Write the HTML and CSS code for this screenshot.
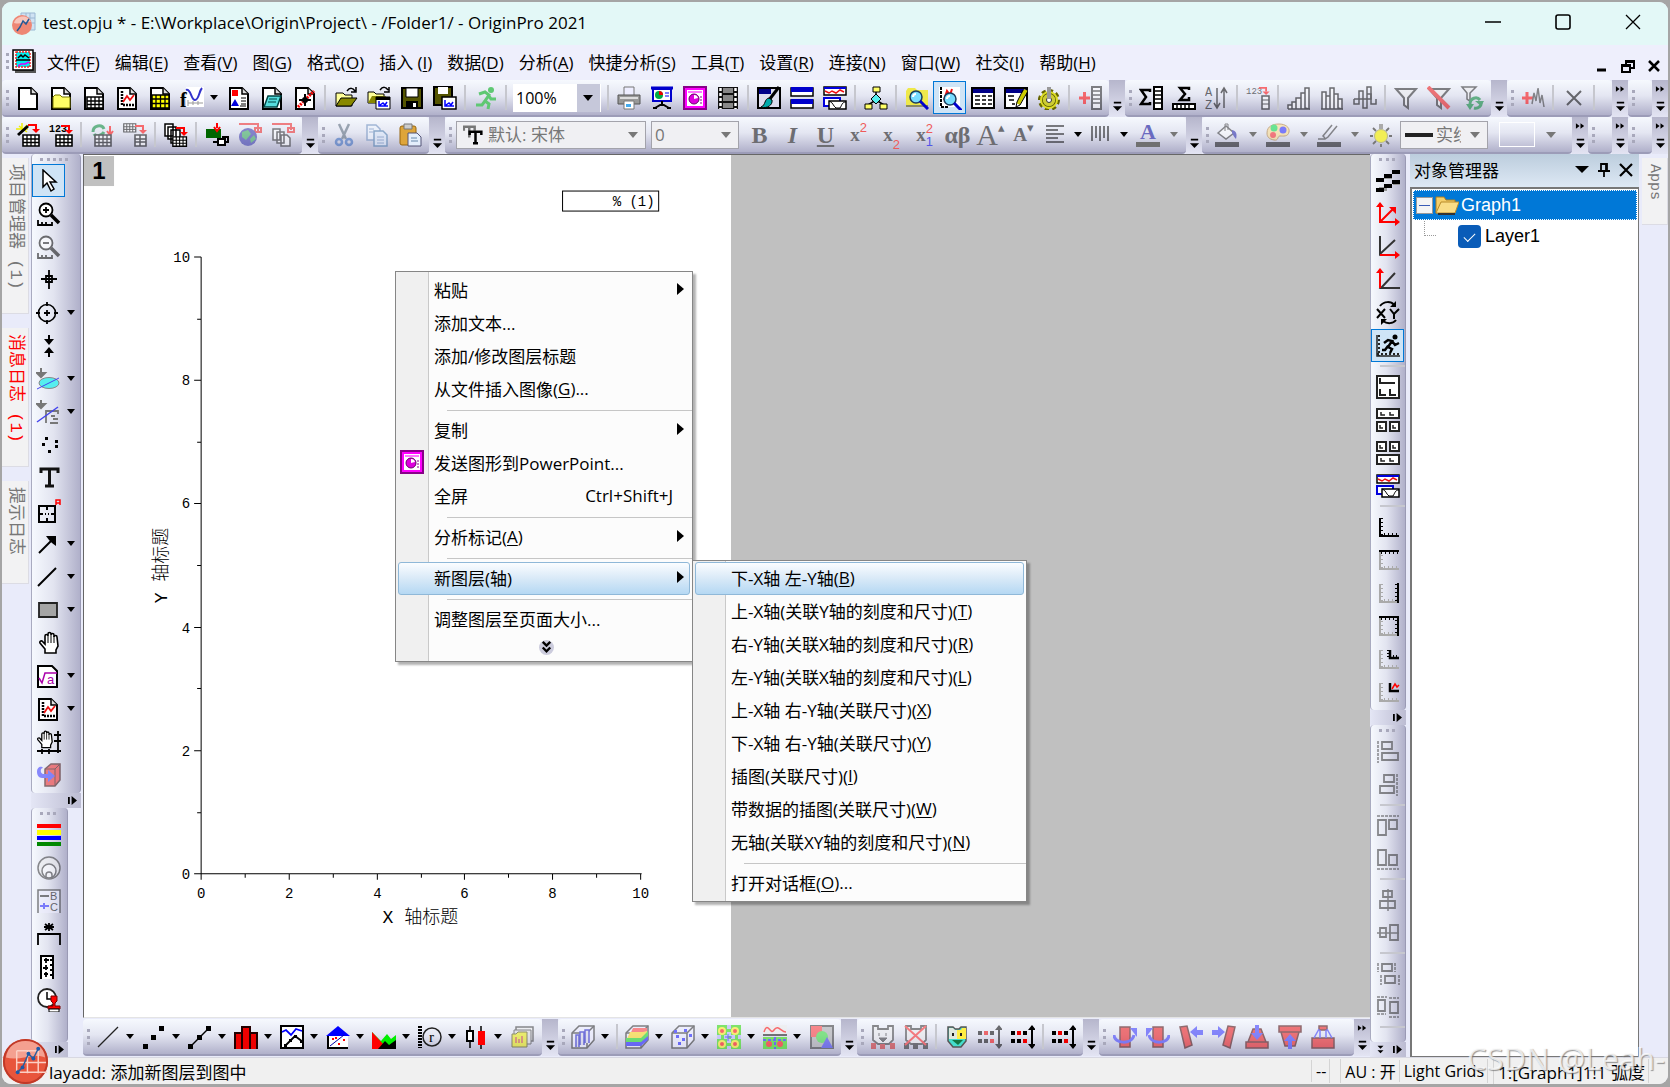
FILE: index.html
```html
<!DOCTYPE html>
<html lang="zh-CN">

  <head>
    <meta charset="utf-8">
    <title>OriginPro 2021</title>
    <link rel="stylesheet" href="styles.css">
  </head>

  <body>
    <!-- icon sprite -->
    <svg class="sprite" aria-hidden="true">
      <defs>
        <g id="pg"><path d="M3 2h12l6 6v15H3z" fill="#fff" stroke="#000" stroke-width="2"/><path d="M15 2v6h6" fill="#ddd" stroke="#000" stroke-width="1.5"/></g>
        <g id="tbl"><path d="M1 1h16v11H1z" fill="#fff" stroke="#000" stroke-width="1.6"/><path d="M1 5h16M1 8.500h16M5 1v11M9 1v11M13 1v11" stroke="#000" stroke-width="1.3"/></g>
        <g id="hook"><path d="M1 2h8v4" fill="none" stroke="#f00" stroke-width="2"/><path d="M5 6h8l-4 4z" fill="#f00"/></g>
        <g id="lens"><circle cx="9" cy="9" r="6" fill="#7df" stroke="#1a3c5c" stroke-width="1.500"/><path d="M13 13l8 8" stroke="#00c" stroke-width="3"/><path d="M6 9a3 3 0 0 1 3-3" fill="none" stroke="#fff" stroke-width="2"/></g>
        <g id="box3"><path d="M1 8l7-7h15v14l-7 8H1z" fill="#eef" stroke="#444" stroke-width="1.500"/><path d="M1 8h15v15M16 8l7-7" fill="none" stroke="#444" stroke-width="1.500"/></g>
        <g id="win"><path d="M1 2h22v20H1z" fill="#fff" stroke="#000" stroke-width="2"/><path d="M2 3h20v4H2z" fill="#008"/></g>
        <g id="redbox"><path d="M8 6l6-5h9v16l-5 6H8z" fill="#e22" stroke="#300" stroke-width="1.500"/><path d="M8 6h10v17M18 6l5-5" fill="none" stroke="#300"/></g>
        <g id="handS"><path d="M6 22v-4L1 12c-1-2 2-3 3-1l2 2V5c0-2 3-2 3 0V3c0-2 3-2 3 0v1c0-2 3-2 3 0v2c0-2 3-2 3 0l1 9-2 4v3z" fill="#fff" stroke="#000" stroke-width="1.600"/><path d="M9 5v7M12 4v8M15 5v7" stroke="#000"/></g>
        <g id="axg" fill="none" stroke="#aaa" stroke-width="2"><path d="M4 3v18h19"/><path d="M6 3v17M4 19h19" stroke-dasharray="1 3"/></g>
      </defs>
      <symbol id="orb" viewBox="0 0 48 48"><circle cx="24" cy="24" r="23" fill="#e8553c"/><circle cx="24" cy="24" r="22" fill="none" stroke="#c03a28" stroke-width="2"/><path d="M4 20C6 8 14 3 24 3s19 6 20 17c-12-5-26 4-40 0z" fill="#f4a090"/><path d="M15 13v23M26 13v23M37 13v23M15 13h23M15 25h30M15 35h31" stroke="#fbcfc4" stroke-width="1.500"/><path d="M16 35l5-5 6-14 5 5 5-10" fill="none" stroke="#2a5f9e" stroke-width="1.500"/><g fill="#1c5aa8"><circle cx="16" cy="35" r="2"/><circle cx="21" cy="30" r="2"/><circle cx="27" cy="16" r="2"/><circle cx="32" cy="21" r="2"/><circle cx="37" cy="11" r="2"/></g></symbol>
      <symbol id="app" viewBox="0 0 24 24"><path d="M9 1h14v17H9z" fill="#cfe2f3" stroke="#9bb8d3"/><path d="M14 1v17M18 1v17M9 6h14M9 11h14" stroke="#9bb8d3"/><circle cx="10" cy="13" r="10" fill="#ee8674"/><path d="M2 11c2-8 14-9 17-1-6-1-10 3-17 1z" fill="#f8c5bb"/><path d="M5 19l3-4 3-6 3 3 3-5" fill="none" stroke="#245a97" stroke-width="1.500"/></symbol>
      <symbol id="graphwin" viewBox="0 0 24 24"><path d="M3 3h21v21H3z" fill="#555"/><path d="M1 1h20v20H1z" fill="#fff" stroke="#000" stroke-width="1.500"/><path d="M4 3h14v15H4z" fill="#0ee" stroke="#e22" stroke-width="1.500" stroke-dasharray="2 1"/><path d="M6 9l3-3 2 2 2-2 4 3M4 11h14" fill="none" stroke="#000" stroke-width="1.500"/><path d="M6 17l3-2 4 0 4-2" fill="none" stroke="#d0f" stroke-width="1.500"/></symbol>
      <symbol id="new" viewBox="0 0 24 24"><use href="#pg"/></symbol>
      <symbol id="folder" viewBox="0 0 24 24"><use href="#pg"/><path d="M4 11l2-2h5l2 2h8v11H4z" fill="#ff6" stroke="#770"/></symbol>
      <symbol id="book" viewBox="0 0 24 24"><use href="#pg"/><use href="#tbl" x="4" y="10"/></symbol>
      <symbol id="graph" viewBox="0 0 24 24"><use href="#pg"/><path d="M7 5v14h13" fill="none" stroke="#000" stroke-width="2.500" stroke-dasharray="2 1"/><path d="M8 16l4-6 3 4 4-5" fill="none" stroke="#e11" stroke-width="1.800"/></symbol>
      <symbol id="matrix" viewBox="0 0 24 24"><use href="#pg"/><path d="M4 9h17v13H4z" fill="#ff0" stroke="#000" stroke-width="1.500"/><path d="M4 13h17M4 17.500h17M8 9v13M12.500 9v13M17 9v13" stroke="#000" stroke-width="1.300"/></symbol>
      <symbol id="func" viewBox="0 0 24 24"><path d="M6 1h18v20H6z" fill="#fff"/><path d="M8 17h15M8 14v6M13 15v4M18 15v4" stroke="#999"/><path d="M6 4c5-2 5 10 9 10s4-9 7-12" fill="none" stroke="#33c" stroke-width="2"/><text x="0" y="21" font-family="Liberation Serif" font-size="20" font-weight="bold">f</text></symbol>
      <symbol id="layout" viewBox="0 0 24 24"><use href="#pg"/><path d="M5 4h6v6H5z" fill="#f00"/><path d="M4 20l4-7 4 7z" fill="#00d"/><path d="M14 12h5M14 15h5M14 18h5M13 20h6" stroke="#000"/></symbol>
      <symbol id="notes" viewBox="0 0 24 24"><use href="#pg"/><path d="M8 10h13l-4 11H4z" fill="#5dd" stroke="#044" stroke-width="1.500"/><path d="M9 13h8M8 16h8" stroke="#044"/></symbol>
      <symbol id="digit" viewBox="0 0 24 24"><use href="#pg"/><path d="M5 21l5-5M14 12l7-7" stroke="#f00" stroke-width="3" stroke-dasharray="2 1"/><path d="M12 8v12M6 14h12" stroke="#000" stroke-width="2"/><circle cx="12" cy="14" r="3"/></symbol>
      <symbol id="open" viewBox="0 0 24 24"><path d="M2 20V7h7l2 2h7v11z" fill="#ff9" stroke="#000"/><path d="M2 20l5-8h16l-6 8z" fill="#880" stroke="#000"/><path d="M13 5c3-4 6-3 8 0M22 1v5h-5" fill="none" stroke="#000" stroke-width="1.500"/></symbol>
      <symbol id="opentpl" viewBox="0 0 24 24"><path d="M1 17V6h6l2 2h8v9z" fill="#ff9" stroke="#000"/><path d="M1 17l4-7h14l-4 7z" fill="#880"/><path d="M9 11h14v12H9z" fill="#fff" stroke="#000"/><path d="M9 11h14v3H9z" fill="#000"/><path d="M12 15v5h9M13 19l3-2 2 2 2-3" fill="none" stroke="#00f" stroke-width="1.500"/><path d="M13 4c3-4 6-3 8 0M22 1v5h-5" fill="none" stroke="#000" stroke-width="1.500"/></symbol>
      <symbol id="save" viewBox="0 0 24 24"><path d="M2 2h20v20H2z" fill="#550" stroke="#000" stroke-width="2"/><path d="M6 2h12v9H6z" fill="#fff" stroke="#000"/><path d="M6 15h12v7H6z" fill="#000"/><path d="M13 17h3v4h-3z" fill="#fff"/></symbol>
      <symbol id="savetpl" viewBox="0 0 24 24"><path d="M1 1h18v18H1z" fill="#550" stroke="#000" stroke-width="2"/><path d="M5 1h10v7H5z" fill="#fff"/><path d="M9 11h14v12H9z" fill="#fff" stroke="#000" stroke-width="1.500"/><path d="M12 14v6h9M13 19l3-2 2 2 2-3" fill="none" stroke="#00f" stroke-width="1.500"/></symbol>
      <symbol id="run" viewBox="0 0 24 24"><circle cx="17" cy="4" r="3"/><path d="M5 8l6-2 4 3-4 6 4 3-1 5M11 15l-3 4H2M14 9l3 4h5" fill="none" stroke="currentColor" stroke-width="3"/></symbol>
      <symbol id="print" viewBox="0 0 24 24"><path d="M7 1h10v9H7z" fill="#eef" stroke="#777"/><path d="M1 9h22v9H1z" fill="#999" stroke="#555"/><path d="M3 12h18" stroke="#ddd" stroke-width="2"/><path d="M7 15h10v8H7z" fill="#fff" stroke="#777"/><path d="M9 18h5v3H9z" fill="#4ae"/></symbol>
      <symbol id="slide" viewBox="0 0 24 24"><path d="M1 2h22" stroke="#00c" stroke-width="3"/><path d="M3 3h18v12H3z" fill="#fff" stroke="#00c" stroke-width="2"/><circle cx="9" cy="9" r="4" fill="#0a4"/><path d="M9 9V5a4 4 0 0 1 4 4z" fill="#e00"/><path d="M15 7h4M15 10h4" stroke="#00f"/><path d="M12 15v4M5 22l7-4 7 4M3 22h4M17 22h4" fill="none" stroke="#000" stroke-width="2"/></symbol>
      <symbol id="ppt" viewBox="0 0 24 24"><path d="M1 1h22v22H1z" fill="#f0f" stroke="#808" stroke-width="2"/><path d="M4 4h16v16H4z" fill="#fff"/><path d="M5 6h14" stroke="#f4f" stroke-width="1.500"/><circle cx="11" cy="13" r="5" fill="#d0d" stroke="#606"/><path d="M11 13V9a4 4 0 0 1 4 3z" fill="#fff"/><path d="M18 10v8" stroke="#808" stroke-dasharray="2 1"/></symbol>
      <symbol id="film" viewBox="0 0 24 24"><path d="M2 1h20v22H2z" fill="#111"/><path d="M7 2h10v5H7zM7 9h10v6H7zM7 17h10v5H7z" fill="#888"/><path d="M4.500 2v21M19.500 2v21" stroke="#fff" stroke-width="2.500" stroke-dasharray="3 2"/></symbol>
      <symbol id="theme" viewBox="0 0 24 24"><path d="M1 2h22v20H1z" fill="#dde" stroke="#000" stroke-width="2"/><path d="M2 3h12v5H2z" fill="#008"/><path d="M22 1L12 14" stroke="#000" stroke-width="3"/><path d="M12 12c-5 1-3 7-8 9 6 2 12-2 11-7z" fill="#0aa" stroke="#000"/></symbol>
      <symbol id="panes" viewBox="0 0 24 24"><path d="M1 2h22v8H1zM1 14h22v8H1z" fill="#fff" stroke="#000" stroke-width="1.500"/><path d="M1 1h22v5H1zM1 13h22v5H1z" fill="#00c"/></symbol>
      <symbol id="merge" viewBox="0 0 24 24"><path d="M1 1h22v8H1z" fill="#fff" stroke="#000" stroke-width="1.500"/><path d="M1 2h22" stroke="#00d" stroke-width="2"/><path d="M2 5l4 2 3-2 4 2 4-3 4 2" fill="none" stroke="#e11" stroke-width="1.500"/><path d="M1 12h16v8H1z" fill="#fff" stroke="#00d" stroke-width="2"/><path d="M6 15h17v8H6z" fill="#fff" stroke="#000" stroke-width="1.500"/><path d="M6 15c4 1 4 5 7 7h4c2-3 2-6 6-6" fill="none" stroke="#000"/></symbol>
      <symbol id="tree" viewBox="0 0 24 24"><path d="M12 5v6M12 14l-8 5M12 14l8 5" stroke="#000" stroke-width="1.500"/><path d="M9 1h7v5H9z" fill="#ff6" stroke="#000"/><path d="M12 8l5 5-5 5-5-5z" fill="#5ee" stroke="#000"/><path d="M1 18h7v5H1zM16 18h7v5h-7z" fill="#ff6" stroke="#000"/></symbol>
      <symbol id="explore" viewBox="0 0 24 24"><path d="M1 5l2-3h7l2 2h11v16H1z" fill="#eee84a"/><path d="M1 20h22" stroke="#886" stroke-width="2"/><use href="#lens" x="2" y="2"/></symbol>
      <symbol id="zoomgraph" viewBox="0 0 24 24"><path d="M1 1h21v20H1z" fill="#fff"/><path d="M3 1v20h8" fill="none" stroke="#000" stroke-width="2" stroke-dasharray="3 1"/><path d="M6 14l3-9 3 4 2-6" fill="none" stroke="#e11" stroke-width="2"/><use href="#lens" x="3" y="4"/></symbol>
      <symbol id="results" viewBox="0 0 24 24"><use href="#win"/><path d="M4 10h5M11 10h4M17 10h4M4 14h5M11 14h4M17 14h4M4 18h5M11 18h4M17 18h4" stroke="#000" stroke-width="1.500"/></symbol>
      <symbol id="cmd" viewBox="0 0 24 24"><use href="#win"/><path d="M4 10h6M5 14h5M8 18h3" stroke="#000" stroke-width="1.500"/><path d="M22 4l-8 14" stroke="#cc0" stroke-width="4"/><path d="M24 5l-8 14-4 2 1-5 6-12" fill="none" stroke="#000"/></symbol>
      <symbol id="gear" viewBox="0 0 24 24"><circle cx="12" cy="14" r="7" fill="#cc3" stroke="#550" stroke-width="1.500"/><circle cx="12" cy="14" r="9" fill="none" stroke="#660" stroke-width="4" stroke-dasharray="4 3"/><circle cx="12" cy="14" r="8" fill="none" stroke="#dd2" stroke-width="2"/><circle cx="12" cy="14" r="2.500" fill="#fff" stroke="#333"/><path d="M12 1v12" stroke="#999" stroke-width="4"/></symbol>
      <symbol id="addcol" viewBox="0 0 24 24"><path d="M1 12h11M6.500 6v12" stroke="#f00" stroke-width="3"/><path d="M14 1h9v22h-9z" fill="#fff" stroke="#222" stroke-width="2"/><path d="M14 5h9M14 9h9M14 13h9M14 17h9" stroke="#222" stroke-width="1.500"/></symbol>
      <symbol id="sumcol" viewBox="0 0 24 24"><path d="M11 6V4H2l5 7-5 7h9v-2" fill="none" stroke="#000" stroke-width="2.500"/><path d="M15 1h8v22h-8z" fill="#fff" stroke="#000" stroke-width="2"/><path d="M15 5h8M15 9h8M15 13h8M15 17h8" stroke="#000" stroke-width="1.500"/></symbol>
      <symbol id="sumrow" viewBox="0 0 24 24"><path d="M17 4V2H8l5 6-5 6h9v-3" fill="none" stroke="#000" stroke-width="2.500"/><path d="M1 18h22v5H1z" fill="#fff" stroke="#000" stroke-width="2"/><path d="M5 18v5M9 18v5M13 18v5M17 18v5" stroke="#000" stroke-width="1.500"/></symbol>
      <symbol id="sort" viewBox="0 0 24 24"><text x="0" y="10" font-size="12" font-family="Liberation Mono">A</text><text x="0" y="23" font-size="12" font-family="Liberation Mono">Z</text><path d="M12 2v19M9 17l3 5 3-5M19 22V3M16 7l3-5 3 5" fill="none" stroke="#000" stroke-width="1.500"/></symbol>
      <symbol id="setval" viewBox="0 0 24 24"><text x="0" y="8" font-size="9" font-family="Liberation Mono">123</text><g transform="translate(12 0) scale(.9)"><use href="#hook"/></g><path d="M16 10h7v13h-7z" fill="#fff" stroke="#000" stroke-width="1.500"/><path d="M16 14h7M16 18h7" stroke="#000"/></symbol>
      <symbol id="bars1" viewBox="0 0 24 24"><path d="M1 23v-4h4v4M5 22v-6h4v7M9 22V12h5v11M14 22V7h4v16M18 22V2h4v21zM1 23h22" fill="#fff" stroke="#000" stroke-width="1.500"/></symbol>
      <symbol id="bars2" viewBox="0 0 24 24"><path d="M2 23V6h4v17M6 22V10h4v13M10 22V2h4v21M14 22V8h4v15M18 22v-9h4v10zM1 23h22" fill="#fff" stroke="#000" stroke-width="1.500"/></symbol>
      <symbol id="bars3" viewBox="0 0 24 24"><path d="M1 13h5V5h4v17h4V1h4v17h5v-5" fill="none" stroke="#000" stroke-width="1.500"/><path d="M1 13v5h5v-5h12V8h-4" fill="none" stroke="#000" stroke-width="1.500"/></symbol>
      <symbol id="filter" viewBox="0 0 24 24"><path d="M2 3h20l-8 9v10l-4-3v-7z" fill="#eee" stroke="#222" stroke-width="2"/></symbol>
      <symbol id="nofilter" viewBox="0 0 24 24"><path d="M2 3h20l-8 9v10l-4-3v-7z" fill="#eee" stroke="#222" stroke-width="2"/><path d="M1 1l21 21" stroke="#e11" stroke-width="4"/></symbol>
      <symbol id="refilter" viewBox="0 0 24 24"><path d="M2 1h14l-6 6v8l-3-2V7z" fill="#eee" stroke="#222" stroke-width="1.500"/><path d="M10 18c0-6 7-8 10-4M14 22c4 1 8-2 7-6" fill="none" stroke="#083" stroke-width="3"/><path d="M15 15h9l-3 5zM6 18h8l-4 6z" fill="#083"/></symbol>
      <symbol id="addplot" viewBox="0 0 24 24"><path d="M1 12h11M6 6v12" stroke="#f00" stroke-width="3"/><path d="M11 18l2-11 2 8 2-13 2 15 2-8 2 12" fill="none" stroke="#333" stroke-width="1.500"/></symbol>
      <symbol id="cross" viewBox="0 0 24 24"><path d="M5 5l14 14M19 5L5 19" stroke="currentColor" stroke-width="2"/></symbol>
      <symbol id="wizard" viewBox="0 0 24 24"><path d="M3 3l8 6M11 2L4 10M6 0v8M0 6h12" stroke="#ee0" stroke-width="1.500"/><path d="M2 12l10-9" stroke="#000" stroke-width="3"/><use href="#hook" x="11"/><use href="#tbl" x="6" y="11"/></symbol>
      <symbol id="import" viewBox="0 0 24 24"><text x="0" y="9" font-size="10" font-weight="bold" font-family="Liberation Mono">123</text><use href="#hook" x="11" y="1"/><use href="#tbl" x="6" y="11"/></symbol>
      <symbol id="reimport" viewBox="0 0 24 24"><path d="M3 9c0-7 9-8 11-3M14 9c-3 5-9 4-10 2" fill="none" stroke="#083" stroke-width="3"/><path d="M20 3v8M17 8l3 4 3-4" fill="none" stroke="#f00" stroke-width="2"/><use href="#tbl" x="4" y="11"/></symbol>
      <symbol id="copycols" viewBox="0 0 24 24"><g transform="scale(.75)"><use href="#tbl"/></g><use href="#hook" x="11" y="1"/><path d="M12 12h11v11H12z" fill="#fff" stroke="#000" stroke-width="1.600"/><path d="M12 16h11M12 19h11M17 12v11" stroke="#000" stroke-width="1.500"/></symbol>
      <symbol id="batch" viewBox="0 0 24 24"><path d="M1 1h8v12H1zM4 4h8v12H4zM7 7h9v13H7z" fill="#fff" stroke="#000" stroke-width="1.500"/><use href="#hook" x="11" y="3"/><g transform="translate(8 13) scale(.85)"><use href="#tbl"/></g></symbol>
      <symbol id="connect" viewBox="0 0 24 24"><path d="M1 6h15v9H1z" fill="#060"/><path d="M12 0v5M9 4l3 4 3-4" fill="none" stroke="#f00" stroke-width="2"/><path d="M8 19h5M13 16h7v6h-7z" fill="#fff" stroke="#000" stroke-width="2"/><path d="M20 19h3V14h-6" fill="none" stroke="#000" stroke-width="2"/></symbol>
      <symbol id="web" viewBox="0 0 24 24"><path d="M1 1h19v7M17 5h6v4h-6z" fill="none" stroke="#e22" stroke-width="2"/><circle cx="10" cy="14" r="9" fill="#33a"/><path d="M4 9l6-2 3 4-5 6-4-3zM12 16l4-4 2 4-5 4z" fill="#3a5"/></symbol>
      <symbol id="sheets" viewBox="0 0 24 24"><path d="M1 1h19v6M17 5h6v4h-6z" fill="none" stroke="#e22" stroke-width="2"/><path d="M2 6h7v11H2zM6 9h7v11H6zM10 12h6l3 3v8h-9z" fill="#fff" stroke="#222" stroke-width="1.500"/></symbol>
      <symbol id="cut" viewBox="0 0 24 24"><path d="M7 1l7 15M17 1l-7 15" stroke="#567" stroke-width="2.500"/><circle cx="7" cy="19" r="3" fill="none" stroke="#36b" stroke-width="2.500"/><circle cx="17" cy="19" r="3" fill="none" stroke="#36b" stroke-width="2.500"/></symbol>
      <symbol id="copy" viewBox="0 0 24 24"><path d="M2 2h9l4 4v11H2z" fill="#eef5ff" stroke="#68b" stroke-width="1.500"/><path d="M9 8h9l4 4v11H9z" fill="#dbe9fb" stroke="#47a" stroke-width="1.500"/><path d="M12 14h7M12 17h7M12 20h7M4 6h5M4 9h4" stroke="#68b"/></symbol>
      <symbol id="paste" viewBox="0 0 24 24"><rect x="2" y="3" width="16" height="19" rx="2" fill="#dea53a" stroke="#96650f"/><path d="M6 1h8v5H6z" fill="#ccc" stroke="#777"/><path d="M10 10h9l4 4v9H10z" fill="#e4eefc" stroke="#557"/><path d="M13 15h6M13 18h7" stroke="#68a"/></symbol>
      <symbol id="tt" viewBox="0 0 24 24"><path d="M1 7V2h13v5M7.500 2v13" fill="none" stroke="#777" stroke-width="3"/><path d="M8 12V8h14v4M15 8v14M12 22h6" fill="none" stroke="#000" stroke-width="3"/></symbol>
      <symbol id="align" viewBox="0 0 24 24"><path d="M2 3h18M2 7h12M2 11h18M2 15h12M2 19h18" stroke="#000" stroke-width="1.500"/></symbol>
      <symbol id="lines" viewBox="0 0 24 24"><path d="M2 3v15M6 3v12M10 3v15M14 3v12M18 3v15" stroke="#000" stroke-width="1.500"/></symbol>
      <symbol id="bucket" viewBox="0 0 24 24"><path d="M3 10l8-7 8 7-8 6z" fill="#fff" stroke="#333" stroke-width="1.500"/><path d="M10 8V1h3v6" fill="none" stroke="#333"/><path d="M17 7c5 1 5 5 4 9-2-2-3-4-4-6z" fill="#22a"/><path d="M0 19h24v5H0z" fill="#111"/></symbol>
      <symbol id="palette" viewBox="0 0 24 24"><path d="M1 10C1 3 7 1 13 1s11 3 10 8-6 4-9 4-1 5-6 4-7-3-7-7z" fill="#fd8" stroke="#a73"/><circle cx="8" cy="5" r="3.500" fill="#0d4"/><circle cx="17" cy="7" r="3.500" fill="#22f"/><circle cx="7" cy="12" r="3" fill="#f22"/><path d="M0 19h24v5H0z" fill="#111"/></symbol>
      <symbol id="pen" viewBox="0 0 24 24"><path d="M1 16h7l3-2L20 3M8 15l-2-2 9-11" fill="none" stroke="#333" stroke-width="1.500"/><path d="M0 19h24v5H0z" fill="#111"/></symbol>
      <symbol id="sun" viewBox="0 0 24 24"><circle cx="12" cy="13" r="6.500" fill="#f2ee55" stroke="#bb8"/><path d="M10 1h4v5h-4z" fill="#aaa"/><path d="M4 5l3 3M20 5l-3 3M1 13h3M20 13h3M4 21l3-3M20 21l-3-3M12 21v3" stroke="#777" stroke-width="1.800"/></symbol>

      <symbol id="pointer" viewBox="0 0 24 24"><path d="M6 1v17l4-4 4 8 3-2-4-7h6z" fill="#fff" stroke="#000" stroke-width="1.500"/></symbol>
      <symbol id="zoomin" viewBox="0 0 24 24"><circle cx="9" cy="8" r="6.500" fill="#fff" stroke="#000" stroke-width="1.800"/><path d="M6 8h6M9 5v6" stroke="#000" stroke-width="1.800"/><path d="M14 13l8 8" stroke="#000" stroke-width="3.500"/><path d="M1 18v5h14v-3M5 23v-3M9 23v-3" fill="none" stroke="#000" stroke-width="1.800"/></symbol>
      <symbol id="zoomout" viewBox="0 0 24 24"><circle cx="9" cy="8" r="6.500" fill="#fff" stroke="#000" stroke-width="1.800"/><path d="M6 8h6" stroke="#000" stroke-width="1.800"/><path d="M14 13l8 8" stroke="#000" stroke-width="3.500"/><path d="M1 18v5h14v-3M5 23v-3M9 23v-3" fill="none" stroke="#000" stroke-width="1.800"/></symbol>
      <symbol id="reader" viewBox="0 0 24 24"><path d="M12 2v19M4 11h16M9 8h6v6H9z" fill="none" stroke="#000" stroke-width="1.800"/></symbol>
      <symbol id="datareader" viewBox="0 0 24 24"><circle cx="11" cy="12" r="8.500" fill="none" stroke="#000" stroke-width="1.600"/><path d="M11 1v4M11 19v4M0 12h4M18 12h4M8 12h6M11 9v6" stroke="#000" stroke-width="1.800"/></symbol>
      <symbol id="selector" viewBox="0 0 24 24"><path d="M12 1v6M12 23v-6" stroke="#000" stroke-width="2"/><path d="M7 5h10l-5 6zM7 19h10l-5-6z"/></symbol>
      <symbol id="region" viewBox="0 0 24 24"><path d="M5 1v8M1 6l4 4 4-4z" stroke="#777" stroke-width="2" fill="#777"/><ellipse cx="13" cy="16" rx="10" ry="5.500" fill="#5ee" stroke="#888"/><path d="M1 22L23 11" stroke="#44e"/></symbol>
      <symbol id="mask" viewBox="0 0 24 24"><path d="M5 0v6M1 4l4 4 4-4z" stroke="#777" stroke-width="2" fill="#777"/><path d="M10 23V11h12v3M15 16h4M17 19h5M14 23h8" fill="none" stroke="#777" stroke-width="1.800"/><path d="M1 22L22 7" stroke="#44e" stroke-width="1.500"/></symbol>
      <symbol id="draw" viewBox="0 0 24 24"><path d="M8 4h3v3H8zM5 10h3v3H5zM11 17h3v3h-3zM18 7h3v3h-3zM18 12h3v3h-3z"/></symbol>
      <symbol id="text" viewBox="0 0 24 24"><path d="M4 7V3h17v4M12.500 3v18M8 20h9" fill="none" stroke="#111" stroke-width="3"/></symbol>
      <symbol id="annot" viewBox="0 0 24 24"><path d="M2 7h16v16H2zM10 7v4M10 19v4M2 15h4M14 15h4M8 15h1M11 15h1" fill="none" stroke="#000" stroke-width="2"/><path d="M19 6V1h4v5M19 4h4" fill="none" stroke="#f00" stroke-width="1.500"/></symbol>
      <symbol id="arrow" viewBox="0 0 24 24"><path d="M3 21L16 8" stroke="#000" stroke-width="2"/><path d="M10 4h10v10l-4-3-3-3z"/></symbol>
      <symbol id="line" viewBox="0 0 24 24"><path d="M2 21L20 3" stroke="#000" stroke-width="2"/></symbol>
      <symbol id="thinline" viewBox="0 0 24 24"><path d="M2 22L22 2" stroke="#222" stroke-width="1.300"/></symbol>
      <symbol id="rect" viewBox="0 0 24 24"><path d="M3 5h18v14H3z" fill="#a5a5a5" stroke="#222" stroke-width="1.800"/></symbol>
      <symbol id="hand" viewBox="0 0 24 24"><use href="#handS" x="2"/></symbol>
      <symbol id="eq" viewBox="0 0 24 24"><path d="M2 2h14l5 5v16H2z" fill="#fff" stroke="#000" stroke-width="2"/><path d="M3 14l3 5 3-10h12" fill="none" stroke="#a0a" stroke-width="1.500"/><text x="11" y="20" font-size="13" fill="#a0a" font-family="Liberation Sans">a</text></symbol>
      <symbol id="handaxis" viewBox="0 0 24 24"><g transform="scale(.8)"><use href="#handS"/></g><path d="M21 1v22M0 21h24M17 5h7M17 11h7M5 19v5M12 19v5" stroke="#000" stroke-width="1.800"/></symbol>
      <symbol id="export" viewBox="0 0 24 24"><use href="#redbox"/><path d="M0 9c0-6 5-6 6-4-3 0-3 5 0 6h5V7l7 6-7 6v-4H5c-3 0-5-3-5-6z" fill="#33f"/></symbol>
      <symbol id="stripes" viewBox="0 0 24 24"><path d="M0 1h24v4H0z" fill="#f00"/><path d="M0 7h24v5H0z" fill="#ff0"/><path d="M0 13h24v4H0z" fill="#00f"/><path d="M0 19h24v4H0z" fill="#080"/></symbol>
      <symbol id="rings" viewBox="0 0 24 24"><circle cx="12" cy="12" r="11" fill="#eee" stroke="#333" stroke-width="1.500"/><circle cx="12" cy="15" r="7" fill="#fff" stroke="#333" stroke-width="1.500"/><path d="M9 23v-4a3 3 0 0 1 6 0v4" fill="none" stroke="#333" stroke-width="1.500"/></symbol>
      <symbol id="legend" viewBox="0 0 24 24"><path d="M1 24V1h22v23" fill="#eef" stroke="#222" stroke-width="1.500"/><path d="M3 7h9" stroke="#222" stroke-width="2"/><path d="M3 17h9M7 14v6" stroke="#22f" stroke-width="2"/><text x="13" y="11" font-size="11" font-family="Liberation Sans">B</text><text x="13" y="22" font-size="11" font-family="Liberation Sans">C</text></symbol>
      <symbol id="star" viewBox="0 0 24 24"><path d="M1 23V12h22v11M12 1v8M8 2l8 6M16 2L8 8M7 5h10" fill="none" stroke="#000" stroke-width="1.800"/></symbol>
      <symbol id="ruler" viewBox="0 0 24 24"><path d="M4 24V1h12v23" fill="#fff" stroke="#000" stroke-width="2"/><path d="M13 5h3M13 10h3M13 15h3M13 20h3" stroke="#000" stroke-width="2"/><path d="M9 3v5M7 5h5M9 10v5M6 13h5M9 17v5M7 19h4" stroke="#000" stroke-width="1.800"/></symbol>
      <symbol id="clock" viewBox="0 0 24 24"><circle cx="10" cy="10" r="9" fill="#fff" stroke="#222" stroke-width="1.800"/><path d="M10 4v7h4" fill="none" stroke="#000" stroke-width="1.500"/><path d="M14 8h6v5l-2 2v3h5v3H11v-3h5v-3l-2-2z" fill="#f00" stroke="#700"/><path d="M12 21h10v3H12z" fill="#fff" stroke="#000"/></symbol>

      <symbol id="scatter" viewBox="0 0 24 24"><path d="M1 19h5v5H1zM9 10h5v5H9zM17 1h5v5h-5z"/></symbol>
      <symbol id="linesym" viewBox="0 0 24 24"><path d="M3 21L20 4" stroke="#000" stroke-width="1.500"/><path d="M0 19h5v5H0zM9 10h5v5H9zM18 1h5v5h-5z"/></symbol>
      <symbol id="column" viewBox="0 0 24 24"><path d="M1 24V8h7v16M8 24V2h8v22M16 24V8h7v16" fill="#e00" stroke="#200" stroke-width="2"/></symbol>
      <symbol id="multi" viewBox="0 0 24 24"><path d="M1 1h22v22H1z" fill="#fff" stroke="#000" stroke-width="2"/><path d="M2 7l4-2 5 5 5-6 6 2" fill="none" stroke="#00f" stroke-width="1.800"/><path d="M5 21l10-10 8 6" fill="none" stroke="#000" stroke-width="1.800"/><path d="M4 19h3v3H4zM9 14h3v3H9zM14 10h3v3h-3zM20 15h3v3h-3z"/></symbol>
      <symbol id="arrowchart" viewBox="0 0 24 24"><path d="M2 9v14h20V9z" fill="#fff"/><path d="M0 11L12 1l12 10z" fill="#00f"/><path d="M2 11v12h20" fill="none" stroke="#000" stroke-width="2"/><path d="M4 21L18 10" stroke="#00a"/><path d="M6 13h2v2H6zM12 18h2v2h-2zM17 14h2v2h-2zM9 12h2v2H9z" fill="#f00"/></symbol>
      <symbol id="area" viewBox="0 0 24 24"><path d="M0 24V7l9 9 6-7 4 5 5-4v14z" fill="#0e0"/><path d="M0 24V7l12 13 1 4z" fill="#f00"/><path d="M6 24l7-8 4 4 7-5v9z"/></symbol>
      <symbol id="polar" viewBox="0 0 24 24"><path d="M2 1v22" stroke="#000" stroke-width="4" stroke-dasharray="2 1"/><circle cx="14" cy="12" r="9" fill="none" stroke="#222" stroke-width="1.500"/><text x="11" y="17" font-size="15" font-family="Liberation Serif">r</text></symbol>
      <symbol id="candle" viewBox="0 0 24 24"><path d="M6 1v22M17 1v23" stroke="#000" stroke-width="1.500"/><path d="M3 6h6v10H3z" fill="#fff" stroke="#000" stroke-width="2"/><path d="M14 6h7v14h-7z" fill="#f00"/></symbol>
      <symbol id="stack" viewBox="0 0 24 24"><path d="M5 2h17v14H5z" fill="#eee" stroke="#333" stroke-width="1.500"/><path d="M3 5h17v14H3z" fill="#ddd" stroke="#333"/><path d="M1 9h4l2-2h9v15H1z" fill="#ee0" stroke="#440"/><path d="M5 18v-6M8 18v-4M11 18v-7" stroke="#c33" stroke-width="1.500"/></symbol>
      <symbol id="bar3d" viewBox="0 0 24 24"><use href="#box3"/><path d="M5 22V10h3v12M9 20V7h4v13M14 18V5h4v13" fill="#dde" stroke="#33c" stroke-width="1.500"/></symbol>
      <symbol id="surface" viewBox="0 0 24 24"><use href="#box3"/><path d="M8 3h14v6l-5 5H3z" fill="#f55"/><path d="M5 7h13l4-1v5l-6 5H1z" fill="#fd3"/><path d="M1 13h15l7-7v6l-7 6H1z" fill="#3d3"/><path d="M1 17h15l7-6v4l-7 6H1z" fill="#33f"/></symbol>
      <symbol id="scatter3d" viewBox="0 0 24 24"><use href="#box3"/><path d="M5 10h3v3H5zM11 13h3v3h-3zM7 17h3v3H7zM13 4h3v3h-3zM18 9h3v3h-3zM3 5h3v3H3z" fill="#33f"/></symbol>
      <symbol id="contour" viewBox="0 0 24 24"><path d="M0 0h24v24H0z" fill="#4d2"/><path d="M12 0v24M0 12h24" stroke="#bbf" stroke-width="4" stroke-dasharray="4 3"/><g fill="#f22" stroke="#fe3" stroke-width="2"><circle cx="5" cy="6" r="3"/><circle cx="18" cy="6" r="3"/><circle cx="5" cy="19" r="3"/><circle cx="18" cy="19" r="3"/></g><path d="M8 12h7M11 9v7" stroke="#33f"/></symbol>
      <symbol id="profile" viewBox="0 0 24 24"><path d="M0 0h24v9H0z" fill="#eee"/><path d="M1 7c4-12 6 4 10-2s7 2 12 2" fill="none" stroke="#f22" stroke-width="1.500"/><path d="M0 10h24" stroke="#333" stroke-width="2"/><path d="M0 12h24v12H0z" fill="#4d2"/><path d="M12 12v12M0 15h24" stroke="#33f" stroke-dasharray="3 2" stroke-width="2"/><circle cx="6" cy="19" r="3" fill="#f22"/><circle cx="17" cy="19" r="3" fill="#f22"/></symbol>
      <symbol id="shapes" viewBox="0 0 24 24"><path d="M1 1h22v22H1z" fill="#aaa" stroke="#333" stroke-width="2"/><path d="M1 1h11v11H1z" fill="#f33"/><circle cx="12" cy="12" r="6" fill="#3d3"/><path d="M17 12l6 11H11z" fill="#33e"/></symbol>
      <symbol id="face" viewBox="0 0 24 24"><path d="M2 1h5v3h10V1h5v14l-4 4H7l-5-4z" fill="#eee" stroke="#333" stroke-width="1.800"/><path d="M8 8v3M15 8v3M8 13h8l-4 4z" fill="#333" stroke="#333"/><path d="M0 18h5v6H0zM9 19h5v5H9zM19 18h5v6h-5z" fill="#c22"/></symbol>
      <symbol id="noface" viewBox="0 0 24 24"><path d="M2 1h5v3h10V1h5v14l-4 4H7l-5-4z" fill="#eee" stroke="#333" stroke-width="1.800"/><path d="M0 18h5v6H0zM9 18h5v6H9zM19 18h5v6h-5z" fill="#222"/><path d="M1 1l21 19M22 1L1 20" stroke="#f22" stroke-width="2"/></symbol>
      <symbol id="mask2" viewBox="0 0 24 24"><path d="M3 2h5l2 2h4l2-2h5v14l-5 6H8l-5-6z" fill="#4dc" stroke="#555" stroke-width="1.500"/><path d="M12 5h4l1-2h4v11h-9z" fill="#fe4"/><path d="M4 3h4l2 2h2v9H4z" fill="#dfe8df"/><path d="M7 15h11l-5 5z" fill="#174"/><path d="M8 8v3M16 8v3" stroke="#222" stroke-width="2"/></symbol>
      <symbol id="dots" viewBox="0 0 24 24"><path d="M0 6h4v4H0zM12 6h4v4h-4zM0 14h4v4H0zM6 14h4v4H6z"/><path d="M6 6h4v4H6zM12 14h4v4h-4z" fill="#e00"/><path d="M21 1v22" stroke="#000" stroke-width="2"/><path d="M17 5l4-5 4 5zM17 19l4 5 4-5z"/></symbol>
      <symbol id="rotl" viewBox="0 0 24 24"><path d="M7 2h10v20H7z" fill="#e11" stroke="#400" stroke-width="1.500"/><path d="M1 10c0 9 18 10 20 0" fill="none" stroke="#33f" stroke-width="3"/><path d="M17 3h7v9z" fill="#33f"/></symbol>
      <symbol id="rotr" viewBox="0 0 24 24"><path d="M7 2h10v20H7z" fill="#e11" stroke="#400" stroke-width="1.500"/><path d="M23 10c0 9-18 10-20 0" fill="none" stroke="#33f" stroke-width="3"/><path d="M7 3H0v9z" fill="#33f"/></symbol>
      <symbol id="tiltl" viewBox="0 0 24 24"><path d="M1 2l7-1 5 19-7 3z" fill="#e11" stroke="#400" stroke-width="1.500"/><path d="M11 7l7-6v4h6v5h-6v3z" fill="#33f"/></symbol>
      <symbol id="tiltr" viewBox="0 0 24 24"><path d="M23 2l-7-1-5 19 7 3z" fill="#e11" stroke="#400" stroke-width="1.500"/><path d="M13 7L6 1v4H0v5h6v3z" fill="#33f"/></symbol>
      <symbol id="persp1" viewBox="0 0 24 24"><path d="M8 4h8l5 13h2v6H1v-6h2zM3 17h18" fill="#e11" stroke="#400" stroke-width="1.500"/><path d="M10 0h4v8h4l-6 7-6-7h4z" fill="#33f"/></symbol>
      <symbol id="persp2" viewBox="0 0 24 24"><path d="M1 1h22v6h-2l-4 14H7L3 7H1zM3 7h18" fill="#e11" stroke="#400" stroke-width="1.500"/><path d="M10 24h4v-8h4l-6-7-6 7h4z" fill="#33f"/></symbol>
      <symbol id="persp3" viewBox="0 0 24 24"><path d="M1 13h22v10H1zM8 1h8v4H8z" fill="#e11" stroke="#400" stroke-width="1.500"/><path d="M8 4L3 13M16 4l5 9M9 5v8M15 5v8" stroke="#33f" stroke-width="1.500"/></symbol>

      <symbol id="aa" viewBox="0 0 24 24"><path d="M8 6h8v4H8zM3 18h8v4H3zM17 12h7v4h-7z" fill="#999"/><path d="M16 1h8v4h-8zM8 5h8v4H8zM0 9h8v4H0zM16 11h8v4h-8zM8 15h8v4H8zM0 19h8v4H0z"/></symbol>
      <symbol id="rescale" viewBox="0 0 24 24"><path d="M4 3v17h17M4 20L18 6" fill="none" stroke="#f00" stroke-width="2"/><path d="M0 5l4-5 4 5zM19 16l5 4-5 4zM13 5h7v7z" fill="#f00"/></symbol>
      <symbol id="rescalex" viewBox="0 0 24 24"><path d="M4 1v18L19 5" fill="none" stroke="#333" stroke-width="2"/><path d="M4 20h17" stroke="#f00" stroke-width="2"/><path d="M19 16l5 4-5 4z" fill="#f00"/></symbol>
      <symbol id="rescaley" viewBox="0 0 24 24"><path d="M24 20H5L19 5" fill="none" stroke="#333" stroke-width="2"/><path d="M4 20V3" stroke="#f00" stroke-width="2"/><path d="M0 5l4-5 4 5z" fill="#f00"/></symbol>
      <symbol id="swap" viewBox="0 0 24 24"><path d="M1 8l8 9M9 8l-8 9M14 8l4 5 5-5M18 13v5M4 5c4-5 11-5 14-1M20 19c-3 4-9 4-13 1" fill="none" stroke="#000" stroke-width="2"/><path d="M14 6h6V0zM5 18h6l-6 6z"/></symbol>
      <symbol id="speed" viewBox="0 0 24 24"><path d="M1 1v21h23" fill="none" stroke="#222" stroke-width="1.500"/><path d="M3 1v21M1 20h23" stroke="#222" stroke-width="2" stroke-dasharray="2 2"/><circle cx="19" cy="3" r="2.500"/><path d="M8 9l4-3 4 1-4 6 4 2-2 4M12 12l-3 4H6M16 7l3 4 4-2" fill="none" stroke="#000" stroke-width="2.500"/></symbol>
      <symbol id="lay1" viewBox="0 0 24 24"><path d="M1 1h22v22H1z" fill="#fff" stroke="#222" stroke-width="2"/><path d="M4 3v5h15M4 14v6h6M14 14v6h6" fill="none" stroke="#222" stroke-width="2"/></symbol>
      <symbol id="lay2" viewBox="0 0 24 24"><path d="M1 1h22v9H1zM1 14h9v9H1zM14 14h9v9h-9z" fill="#fff" stroke="#222" stroke-width="2"/><path d="M5 4v3h4M14 4v3h4M4 17v3h3M17 17v3h3" fill="none" stroke="#222" stroke-width="1.500"/></symbol>
      <symbol id="lay3" viewBox="0 0 24 24"><path d="M1 1h9v9H1zM14 1h9v9h-9zM1 14h22v9H1z" fill="#fff" stroke="#222" stroke-width="2"/><path d="M4 4v3h3M17 4v3h3M5 17v3h4M14 17v3h4" fill="none" stroke="#222" stroke-width="1.500"/></symbol>
      <symbol id="ax1" viewBox="0 0 24 24"><path d="M4 3v18h19" fill="none" stroke="#000" stroke-width="2"/><path d="M6 3v17M4 19h19" stroke="#000" stroke-width="2" stroke-dasharray="1 3"/></symbol>
      <symbol id="ax2" viewBox="0 0 24 24"><use href="#axg"/><path d="M3 3h20" stroke="#000" stroke-width="2"/><path d="M5 5h18" stroke="#000" stroke-width="2" stroke-dasharray="1 3"/></symbol>
      <symbol id="ax3" viewBox="0 0 24 24"><use href="#axg"/><path d="M22 2v20" stroke="#000" stroke-width="2"/><path d="M20 3v18" stroke="#000" stroke-width="2" stroke-dasharray="1 3"/></symbol>
      <symbol id="ax4" viewBox="0 0 24 24"><use href="#axg"/><path d="M3 3h19v19" fill="none" stroke="#000" stroke-width="2"/><path d="M5 5h15v17" fill="none" stroke="#000" stroke-width="2" stroke-dasharray="1 3"/></symbol>
      <symbol id="ax5" viewBox="0 0 24 24"><use href="#axg"/><path d="M14 3v8h9" fill="none" stroke="#000" stroke-width="2.500"/><path d="M12 3v8M14 9h9" stroke="#000" stroke-dasharray="1 2" stroke-width="2"/></symbol>
      <symbol id="ax6" viewBox="0 0 24 24"><use href="#axg"/><path d="M14 3v8h9" fill="none" stroke="#000" stroke-width="2.500"/><path d="M16 9l3-5 2 3 2-2" fill="none" stroke="#f00" stroke-width="1.500"/></symbol>
      <symbol id="al1" viewBox="0 0 24 24"><path d="M2 1v22" stroke="#333" stroke-width="1.500" stroke-dasharray="3 1"/><path d="M6 2h10v7H6zM6 13h16v7H6z" fill="none" stroke="#333" stroke-width="1.800"/></symbol>
      <symbol id="al2" viewBox="0 0 24 24"><path d="M21 1v22" stroke="#333" stroke-width="1.500" stroke-dasharray="3 1"/><path d="M8 2h10v7H8zM4 13h14v7H4z" fill="none" stroke="#333" stroke-width="1.800"/></symbol>
      <symbol id="al3" viewBox="0 0 24 24"><path d="M1 2h22" stroke="#333" stroke-width="1.500" stroke-dasharray="3 1"/><path d="M2 6h8v15H2zM13 6h8v9h-8z" fill="none" stroke="#333" stroke-width="1.800"/></symbol>
      <symbol id="al4" viewBox="0 0 24 24"><path d="M1 22h22" stroke="#333" stroke-width="1.500" stroke-dasharray="3 1"/><path d="M2 3h8v15H2zM13 8h8v10h-8z" fill="none" stroke="#333" stroke-width="1.800"/></symbol>
      <symbol id="al5" viewBox="0 0 24 24"><path d="M7 3h9v6H7zM4 13h15v7H4z" fill="none" stroke="#333" stroke-width="1.800"/><path d="M12 1v22" stroke="#333" stroke-width="1.500"/></symbol>
      <symbol id="al6" viewBox="0 0 24 24"><path d="M4 7h6v9H4zM14 4h8v15h-8z" fill="none" stroke="#333" stroke-width="1.800"/><path d="M1 12h22" stroke="#333" stroke-width="1.500"/></symbol>
      <symbol id="al7" viewBox="0 0 24 24"><path d="M6 2h10v7H6zM9 14h10v7H9z" fill="none" stroke="#333" stroke-width="1.800"/><path d="M2 1v9M19 1v9M5 13v10M23 13v10" stroke="#333" stroke-width="1.500" stroke-dasharray="3 1"/></symbol>
      <symbol id="al8" viewBox="0 0 24 24"><path d="M2 5h7v11H2zM14 7h8v11h-8z" fill="none" stroke="#333" stroke-width="1.800"/><path d="M1 2h10M1 19h9M13 3h10M13 22h10" stroke="#333" stroke-width="1.500" stroke-dasharray="3 1"/></symbol>
      <symbol id="more" viewBox="0 0 12 30"><path d="M2 19h8" stroke="#000" stroke-width="2"/><path d="M1 23h10l-5 5z"/></symbol>
      <symbol id="more2" viewBox="0 0 12 30"><path d="M1 1l4 3-4 3zM6 1l4 3-4 3z"/><path d="M2 19h8" stroke="#000" stroke-width="2"/><path d="M1 23h10l-5 5z"/></symbol>
      <symbol id="moreh" viewBox="0 0 12 10"><path d="M1 1h2v8H1zM5 0l6 5-6 5z"/></symbol>
      <symbol id="openfolder" viewBox="0 0 24 24"><path d="M1 20V4h8l2 3h9v13z" fill="#f4cf6a" stroke="#a87c20"/><path d="M1 20l5-11h18l-4 11z" fill="#f9dd87" stroke="#b98b2a"/><path d="M3 20h17v2H3z" fill="#333"/></symbol>
    </svg>

    <div class="window">
      <header class="titlebar">
        <svg class="icon"><use href="#app"/></svg>
        <h1>test.opju * - E:\Workplace\Origin\Project\ - /Folder1/ - OriginPro 2021</h1>
        <button class="winbtn" aria-label="最小化"><svg viewBox="0 0 16 16"><path d="M0 8h16" stroke="#000" stroke-width="1.300"/></svg></button>
        <button class="winbtn" aria-label="最大化"><svg viewBox="0 0 16 16"><rect x="1" y="1" width="14" height="14" rx="2" fill="none" stroke="#000" stroke-width="1.600"/></svg></button>
        <button class="winbtn" aria-label="关闭"><svg viewBox="0 0 16 16"><path d="M1 1l14 14M15 1L1 15" stroke="#000" stroke-width="1.300"/></svg></button>
      </header>

      <nav class="menubar">
        <span class="grip"></span>
        <svg class="icon"><use href="#graphwin"/></svg>
        <button>文件(<u>F</u>)</button>
        <button>编辑(<u>E</u>)</button>
        <button>查看(<u>V</u>)</button>
        <button>图(<u>G</u>)</button>
        <button>格式(<u>O</u>)</button>
        <button>插入 (<u>I</u>)</button>
        <button>数据(<u>D</u>)</button>
        <button>分析(<u>A</u>)</button>
        <button>快捷分析(<u>S</u>)</button>
        <button>工具(<u>T</u>)</button>
        <button>设置(<u>R</u>)</button>
        <button>连接(<u>N</u>)</button>
        <button>窗口(<u>W</u>)</button>
        <button>社交(<u>I</u>)</button>
        <button>帮助(<u>H</u>)</button>
        <div class="mdi">
          <button aria-label="最小化窗口"><svg viewBox="0 0 14 14"><path d="M2 11h9" stroke="#000" stroke-width="3"/></svg></button>
          <button aria-label="还原窗口"><svg viewBox="0 0 14 14"><path d="M5 6V2h8v7H9M5 3h8M1 6h8v7H1zM1 7h8" fill="none" stroke="#000" stroke-width="2"/></svg></button>
          <button aria-label="关闭窗口"><svg viewBox="0 0 14 14"><path d="M2 2l10 10M12 2L2 12" stroke="#000" stroke-width="2.500"/></svg></button>
        </div>
      </nav>

      <!-- toolbar row 1 -->
      <div class="bar-row">
        <div class="bar">
          <span class="grip"></span>
          <button class="tb"><svg class="icon"><use href="#new"/></svg></button>
          <button class="tb"><svg class="icon"><use href="#folder"/></svg></button>
          <button class="tb"><svg class="icon"><use href="#book"/></svg></button>
          <button class="tb"><svg class="icon"><use href="#graph"/></svg></button>
          <button class="tb"><svg class="icon"><use href="#matrix"/></svg></button>
          <button class="tb drop"><svg class="icon"><use href="#func"/></svg></button>
          <button class="tb"><svg class="icon"><use href="#layout"/></svg></button>
          <button class="tb"><svg class="icon"><use href="#notes"/></svg></button>
          <button class="tb"><svg class="icon"><use href="#digit"/></svg></button>
          <i class="sep"></i>
          <button class="tb"><svg class="icon"><use href="#open"/></svg></button>
          <button class="tb"><svg class="icon"><use href="#opentpl"/></svg></button>
          <button class="tb"><svg class="icon"><use href="#save"/></svg></button>
          <button class="tb"><svg class="icon"><use href="#savetpl"/></svg></button>
          <i class="sep"></i>
          <button class="tb runner"><svg class="icon"><use href="#run"/></svg></button>
          <i class="sep"></i>
          <span class="combo zoom"><select aria-label="缩放"><option>100%</option></select><i class="down"></i></span>
          <i class="sep"></i>
          <button class="tb"><svg class="icon"><use href="#print"/></svg></button>
          <button class="tb"><svg class="icon"><use href="#slide"/></svg></button>
          <button class="tb"><svg class="icon"><use href="#ppt"/></svg></button>
          <button class="tb"><svg class="icon"><use href="#film"/></svg></button>
          <i class="sep"></i>
          <button class="tb"><svg class="icon"><use href="#theme"/></svg></button>
          <button class="tb"><svg class="icon"><use href="#panes"/></svg></button>
          <button class="tb"><svg class="icon"><use href="#merge"/></svg></button>
          <i class="sep"></i>
          <button class="tb"><svg class="icon"><use href="#tree"/></svg></button>
          <i class="sep"></i>
          <button class="tb"><svg class="icon"><use href="#explore"/></svg></button>
          <button class="tb on"><svg class="icon"><use href="#zoomgraph"/></svg></button>
          <button class="tb"><svg class="icon"><use href="#results"/></svg></button>
          <button class="tb"><svg class="icon"><use href="#cmd"/></svg></button>
          <button class="tb"><svg class="icon"><use href="#gear"/></svg></button>
          <i class="sep"></i>
          <button class="tb off"><svg class="icon"><use href="#addcol"/></svg></button>
        </div>
        <button class="cap"><svg><use href="#more"/></svg></button>
        <div class="bar">
          <span class="grip"></span>
          <button class="tb"><svg class="icon"><use href="#sumcol"/></svg></button>
          <button class="tb"><svg class="icon"><use href="#sumrow"/></svg></button>
          <button class="tb off"><svg class="icon"><use href="#sort"/></svg></button>
          <i class="sep"></i>
          <button class="tb off"><svg class="icon"><use href="#setval"/></svg></button>
          <i class="sep"></i>
          <button class="tb off"><svg class="icon"><use href="#bars1"/></svg></button>
          <button class="tb off"><svg class="icon"><use href="#bars2"/></svg></button>
          <button class="tb off"><svg class="icon"><use href="#bars3"/></svg></button>
          <i class="sep"></i>
          <button class="tb off"><svg class="icon"><use href="#filter"/></svg></button>
          <button class="tb off"><svg class="icon"><use href="#nofilter"/></svg></button>
          <button class="tb off"><svg class="icon"><use href="#refilter"/></svg></button>
        </div>
        <button class="cap"><svg><use href="#more"/></svg></button>
        <div class="bar grow">
          <span class="grip"></span>
          <button class="tb off"><svg class="icon"><use href="#addplot"/></svg></button>
          <i class="sep"></i>
          <button class="tb off"><svg class="icon"><use href="#cross"/></svg></button>
          <i class="sep"></i>
        </div>
        <button class="cap"><svg><use href="#more2"/></svg></button>
        <div class="bar stub"><span class="grip"></span></div>
        <button class="cap"><svg><use href="#more2"/></svg></button>
      </div>

      <!-- toolbar row 2 -->
      <div class="bar-row">
        <div class="bar">
          <span class="grip"></span>
          <button class="tb"><svg class="icon"><use href="#wizard"/></svg></button>
          <button class="tb"><svg class="icon"><use href="#import"/></svg></button>
          <i class="sep"></i>
          <button class="tb off"><svg class="icon"><use href="#reimport"/></svg></button>
          <button class="tb off"><svg class="icon"><use href="#copycols"/></svg></button>
          <i class="sep"></i>
          <button class="tb"><svg class="icon"><use href="#batch"/></svg></button>
          <i class="sep"></i>
          <button class="tb"><svg class="icon"><use href="#connect"/></svg></button>
          <button class="tb off"><svg class="icon"><use href="#web"/></svg></button>
          <button class="tb off"><svg class="icon"><use href="#sheets"/></svg></button>
        </div>
        <button class="cap"><svg><use href="#more"/></svg></button>
        <div class="bar">
          <span class="grip"></span>
          <button class="tb off"><svg class="icon"><use href="#cut"/></svg></button>
          <button class="tb off"><svg class="icon"><use href="#copy"/></svg></button>
          <button class="tb"><svg class="icon"><use href="#paste"/></svg></button>
        </div>
        <button class="cap"><svg><use href="#more"/></svg></button>
        <div class="bar">
          <span class="grip"></span>
          <span class="combo grey font"><svg class="icon"><use href="#tt"/></svg><select aria-label="字体" disabled><option>默认: 宋体</option></select><i class="down"></i></span>
          <span class="combo grey size"><select aria-label="字号" disabled><option>0</option></select><i class="down"></i></span>
          <button class="tb fmt"><b>B</b></button>
          <button class="tb fmt"><b><em>I</em></b></button>
          <button class="tb fmt"><u>U</u></button>
          <button class="tb fmt small">x<sup class="red">2</sup></button>
          <button class="tb fmt small">x<sub class="red">2</sub></button>
          <button class="tb fmt small">x<span class="both"><span class="red">2</span><span class="blue">1</span></span></button>
          <button class="tb fmt">αβ</button>
          <button class="tb fmt big">A<sup>▴</sup></button>
          <button class="tb fmt small">A<sup>▾</sup></button>
          <button class="tb drop half"><svg class="icon"><use href="#align"/></svg></button>
          <button class="tb drop half"><svg class="icon"><use href="#lines"/></svg></button>
          <button class="tb drop wide off"><span class="fontcolor">A</span></button>
        </div>
        <button class="cap"><svg><use href="#more"/></svg></button>
        <div class="bar grow">
          <span class="grip"></span>
          <button class="tb drop wide off"><svg class="icon"><use href="#bucket"/></svg></button>
          <button class="tb drop wide off"><svg class="icon"><use href="#palette"/></svg></button>
          <button class="tb drop wide off"><svg class="icon"><use href="#pen"/></svg></button>
          <button class="tb"><svg class="icon"><use href="#sun"/></svg></button>
          <span class="combo grey linetype"><i class="stroke"></i><select aria-label="线型" disabled><option>实线</option></select><i class="down"></i></span>
          <button class="swatch" aria-label="颜色"></button>
          <i class="down dim"></i>
        </div>
        <button class="cap"><svg><use href="#more2"/></svg></button>
        <div class="bar stub"><span class="grip"></span></div>
        <button class="cap"><svg><use href="#more2"/></svg></button>
        <div class="bar stub"><span class="grip"></span></div>
        <button class="cap"><svg><use href="#more2"/></svg></button>
      </div>

      <main class="workspace">
        <aside class="tabs left">
          <button class="tab t1">项目管理器 (1)</button>
          <button class="tab t2 alert">消息日志 (1)</button>
          <button class="tab t3">提示日志</button>
        </aside>

        <div class="dock left-dock">
          <div class="vbar">
            <span class="vgrip long"></span>
            <button class="tb on"><svg class="icon"><use href="#pointer"/></svg></button>
            <button class="tb"><svg class="icon"><use href="#zoomin"/></svg></button>
            <button class="tb off"><svg class="icon"><use href="#zoomout"/></svg></button>
            <button class="tb"><svg class="icon"><use href="#reader"/></svg></button>
            <button class="tb drop"><svg class="icon"><use href="#datareader"/></svg></button>
            <button class="tb"><svg class="icon"><use href="#selector"/></svg></button>
            <button class="tb drop"><svg class="icon"><use href="#region"/></svg></button>
            <button class="tb drop"><svg class="icon"><use href="#mask"/></svg></button>
            <button class="tb"><svg class="icon"><use href="#draw"/></svg></button>
            <button class="tb"><svg class="icon"><use href="#text"/></svg></button>
            <button class="tb"><svg class="icon"><use href="#annot"/></svg></button>
            <button class="tb drop"><svg class="icon"><use href="#arrow"/></svg></button>
            <button class="tb drop"><svg class="icon"><use href="#line"/></svg></button>
            <button class="tb drop"><svg class="icon"><use href="#rect"/></svg></button>
            <button class="tb"><svg class="icon"><use href="#hand"/></svg></button>
            <button class="tb drop"><svg class="icon"><use href="#eq"/></svg></button>
            <button class="tb drop"><svg class="icon"><use href="#graph"/></svg></button>
            <button class="tb"><svg class="icon"><use href="#handaxis"/></svg></button>
            <button class="tb off"><svg class="icon"><use href="#export"/></svg></button>
          </div>
          <button class="vcap"><svg><use href="#moreh"/></svg></button>
          <div class="vbar narrow fill">
            <span class="vgrip"></span>
            <button class="tb"><svg class="icon"><use href="#stripes"/></svg></button>
            <button class="tb off"><svg class="icon"><use href="#rings"/></svg></button>
            <button class="tb off"><svg class="icon"><use href="#legend"/></svg></button>
            <button class="tb"><svg class="icon"><use href="#star"/></svg></button>
            <button class="tb"><svg class="icon"><use href="#ruler"/></svg></button>
            <button class="tb"><svg class="icon"><use href="#clock"/></svg></button>
          </div>
          <button class="vcap narrow"><svg><use href="#moreh"/></svg></button>
        </div>

        <div class="center">
          <section class="canvas">
            <svg class="page" viewBox="0 0 646 861" role="img" aria-label="Graph1">
              <rect width="30" height="30" y="1" fill="#c0c0c0"/>
              <text class="layer-no" x="15" y="24">1</text>
              <rect x="478" y="36" width="96" height="20" fill="none" stroke="#000"/>
              <text class="tick" x="570" y="51" text-anchor="end">% (1)</text>
              <path d="M117 102V718H557M110 102h7M110 225h7M110 348h7M110 472h7M110 595h7M110 718h7M113 164h4M113 287h4M113 410h4M113 533h4M113 657h4M117 718v6M205 718v6M293 718v6M380 718v6M468 718v6M556 718v6M161 718v4M249 718v4M337 718v4M424 718v4M512 718v4" fill="none" stroke="#000"/>
              <g class="tick" text-anchor="end">
                <text x="106" y="107">10</text>
                <text x="106" y="230">8</text>
                <text x="106" y="353">6</text>
                <text x="106" y="477">4</text>
                <text x="106" y="600">2</text>
                <text x="106" y="723">0</text>
              </g>
              <g class="tick" text-anchor="middle">
                <text x="117" y="742">0</text>
                <text x="205" y="742">2</text>
                <text x="293" y="742">4</text>
                <text x="380" y="742">6</text>
                <text x="468" y="742">8</text>
                <text x="556" y="742">10</text>
              </g>
              <text class="axis-title" x="336" y="767">X 轴标题</text>
              <text class="axis-title" transform="translate(83 410) rotate(-90)">Y 轴标题</text>
            </svg>

            <ul class="menu main-menu">
              <li><button>粘贴<span class="sub"></span></button></li>
              <li><button>添加文本...</button></li>
              <li><button>添加/修改图层标题</button></li>
              <li><button>从文件插入图像(<u>G</u>)...</button></li>
              <li class="rule"></li>
              <li><button>复制<span class="sub"></span></button></li>
              <li><button class="with-icon"><svg class="icon"><use href="#ppt"/></svg>发送图形到PowerPoint...</button></li>
              <li><button>全屏<kbd>Ctrl+Shift+J</kbd></button></li>
              <li class="rule"></li>
              <li><button>分析标记(<u>A</u>)<span class="sub"></span></button></li>
              <li class="rule"></li>
              <li><button class="hot">新图层(轴)<span class="sub"></span></button></li>
              <li class="rule"></li>
              <li><button>调整图层至页面大小...</button></li>
              <li class="expand"><button aria-label="展开"><svg viewBox="0 0 16 16"><circle cx="8" cy="8" r="8" fill="#ccd"/><path d="M4 2l4 4 4-4M4 8l4 4 4-4" fill="none" stroke="#000" stroke-width="2.500"/></svg></button></li>
            </ul>

            <ul class="menu sub-menu">
              <li><button class="hot">下-X轴 左-Y轴(<u>B</u>)</button></li>
              <li><button>上-X轴(关联Y轴的刻度和尺寸)(<u>T</u>)</button></li>
              <li><button>右-Y轴(关联X轴的刻度和尺寸)(<u>R</u>)</button></li>
              <li><button>左-Y轴(关联X轴的刻度和尺寸)(<u>L</u>)</button></li>
              <li><button>上-X轴 右-Y轴(关联尺寸)(<u>X</u>)</button></li>
              <li><button>下-X轴 右-Y轴(关联尺寸)(<u>Y</u>)</button></li>
              <li><button>插图(关联尺寸)(<u>I</u>)</button></li>
              <li><button>带数据的插图(关联尺寸)(<u>W</u>)</button></li>
              <li><button>无轴(关联XY轴的刻度和尺寸)(<u>N</u>)</button></li>
              <li class="rule"></li>
              <li><button>打开对话框(<u>O</u>)...</button></li>
            </ul>
          </section>

          <div class="bar-row">
            <div class="bar">
              <span class="grip"></span>
              <button class="tb drop"><svg class="icon"><use href="#thinline"/></svg></button>
              <button class="tb drop"><svg class="icon"><use href="#scatter"/></svg></button>
              <button class="tb drop"><svg class="icon"><use href="#linesym"/></svg></button>
              <button class="tb drop"><svg class="icon"><use href="#column"/></svg></button>
              <button class="tb drop"><svg class="icon"><use href="#multi"/></svg></button>
              <button class="tb drop"><svg class="icon"><use href="#arrowchart"/></svg></button>
              <button class="tb drop"><svg class="icon"><use href="#area"/></svg></button>
              <button class="tb drop"><svg class="icon"><use href="#polar"/></svg></button>
              <button class="tb drop"><svg class="icon"><use href="#candle"/></svg></button>
              <button class="tb off"><svg class="icon"><use href="#stack"/></svg></button>
            </div>
            <button class="cap"><svg><use href="#more"/></svg></button>
            <div class="bar">
              <span class="grip"></span>
              <button class="tb drop half"><svg class="icon"><use href="#bar3d"/></svg></button>
              <i class="sep"></i>
              <button class="tb drop half"><svg class="icon"><use href="#surface"/></svg></button>
              <button class="tb drop half"><svg class="icon"><use href="#scatter3d"/></svg></button>
              <button class="tb drop half"><svg class="icon"><use href="#contour"/></svg></button>
              <button class="tb drop half"><svg class="icon"><use href="#profile"/></svg></button>
              <button class="tb off"><svg class="icon"><use href="#shapes"/></svg></button>
            </div>
            <button class="cap"><svg><use href="#more"/></svg></button>
            <div class="bar">
              <span class="grip"></span>
              <button class="tb off"><svg class="icon"><use href="#face"/></svg></button>
              <button class="tb off"><svg class="icon"><use href="#noface"/></svg></button>
              <i class="sep"></i>
              <button class="tb"><svg class="icon"><use href="#mask2"/></svg></button>
              <button class="tb off"><svg class="icon"><use href="#dots"/></svg></button>
              <button class="tb"><svg class="icon"><use href="#dots"/></svg></button>
              <i class="sep"></i>
              <button class="tb"><svg class="icon"><use href="#dots"/></svg></button>
            </div>
            <button class="cap"><svg><use href="#more"/></svg></button>
            <div class="bar grow">
              <span class="grip"></span>
              <button class="tb off"><svg class="icon"><use href="#rotl"/></svg></button>
              <button class="tb off"><svg class="icon"><use href="#rotr"/></svg></button>
              <button class="tb off"><svg class="icon"><use href="#tiltl"/></svg></button>
              <button class="tb off"><svg class="icon"><use href="#tiltr"/></svg></button>
              <button class="tb off"><svg class="icon"><use href="#persp1"/></svg></button>
              <button class="tb off"><svg class="icon"><use href="#persp2"/></svg></button>
              <button class="tb off"><svg class="icon"><use href="#persp3"/></svg></button>
            </div>
            <button class="cap"><svg><use href="#more2"/></svg></button>
          </div>
        </div>

        <div class="dock right-dock">
          <div class="vbar">
            <span class="vgrip"></span>
            <button class="tb"><svg class="icon"><use href="#aa"/></svg></button>
            <button class="tb"><svg class="icon"><use href="#rescale"/></svg></button>
            <button class="tb"><svg class="icon"><use href="#rescalex"/></svg></button>
            <button class="tb"><svg class="icon"><use href="#rescaley"/></svg></button>
            <button class="tb"><svg class="icon"><use href="#swap"/></svg></button>
            <button class="tb on"><svg class="icon"><use href="#speed"/></svg></button>
            <i class="vsep"></i>
            <button class="tb"><svg class="icon"><use href="#lay1"/></svg></button>
            <button class="tb"><svg class="icon"><use href="#lay2"/></svg></button>
            <button class="tb"><svg class="icon"><use href="#lay3"/></svg></button>
            <button class="tb"><svg class="icon"><use href="#merge"/></svg></button>
            <i class="vsep"></i>
            <button class="tb"><svg class="icon"><use href="#ax1"/></svg></button>
            <button class="tb"><svg class="icon"><use href="#ax2"/></svg></button>
            <button class="tb"><svg class="icon"><use href="#ax3"/></svg></button>
            <button class="tb"><svg class="icon"><use href="#ax4"/></svg></button>
            <button class="tb"><svg class="icon"><use href="#ax5"/></svg></button>
            <button class="tb"><svg class="icon"><use href="#ax6"/></svg></button>
          </div>
          <button class="vcap"><svg><use href="#moreh"/></svg></button>
          <div class="vbar fill">
            <span class="vgrip"></span>
            <button class="tb off"><svg class="icon"><use href="#al1"/></svg></button>
            <button class="tb off"><svg class="icon"><use href="#al2"/></svg></button>
            <i class="vsep"></i>
            <button class="tb off"><svg class="icon"><use href="#al3"/></svg></button>
            <button class="tb off"><svg class="icon"><use href="#al4"/></svg></button>
            <i class="vsep"></i>
            <button class="tb off"><svg class="icon"><use href="#al5"/></svg></button>
            <button class="tb off"><svg class="icon"><use href="#al6"/></svg></button>
            <i class="vsep"></i>
            <button class="tb off"><svg class="icon"><use href="#al7"/></svg></button>
            <button class="tb off"><svg class="icon"><use href="#al8"/></svg></button>
            <i class="vsep"></i>
          </div>
          <button class="vcap"><svg viewBox="0 0 12 12"><path d="M2 1h8L6 5zM2 7h8l-4 4z"/></svg><svg><use href="#moreh"/></svg></button>
        </div>

        <aside class="panel">
          <header>
            <h2>对象管理器</h2>
            <button aria-label="菜单"><i class="down"></i></button>
            <button aria-label="固定"><svg viewBox="0 0 14 14"><path d="M4 1h6v7H4zM9 1v7M1 8h12M7 8v6" fill="none" stroke="#000" stroke-width="1.800"/></svg></button>
            <button aria-label="关闭面板"><svg viewBox="0 0 14 14"><path d="M1 1l12 12M13 1L1 13" stroke="#000" stroke-width="2.200"/></svg></button>
          </header>
          <div class="objects">
            <div class="node selected"><button class="toggle" aria-label="折叠"></button><svg class="icon"><use href="#openfolder"/></svg>Graph1</div>
            <div class="node child"><i class="branch"></i><label><input type="checkbox" checked>Layer1</label></div>
          </div>
        </aside>

        <aside class="tabs right">
          <button class="tab">Apps</button>
        </aside>
      </main>

      <footer class="status">
        <span class="msg">layadd: 添加新图层到图中</span>
        <span>--</span>
        <span class="gap"></span>
        <span>AU : 开</span>
        <span>Light Grids</span>
        <span class="gap small"></span>
        <span class="where">1:[Graph1]1!1 弧度</span>
        <span class="end"></span>
      </footer>
      <svg class="orb"><use href="#orb"/></svg>
      <div class="watermark">CSDN @Leah-</div>
    </div>
  </body>

</html>
```
FILE: styles.css
```css
* {
  box-sizing: border-box;
}

body {
  margin: 0;
  height: 100vh;
  padding: 2px 2px 3px 2px;
  background-color: #a5a5a5;
  font-family: "Open Sans", "Noto Sans CJK SC", sans-serif;
  font-size: 16px;
  color: #000;
}

button {
  padding: 0;
  border: 0;
  background: none;
  font: inherit;
  color: inherit;
}

h1,
h2 {
  margin: 0;
  font-size: 17px;
  font-weight: normal;
}

.sprite {
  display: none;
}

.icon {
  width: 24px;
  height: 24px;
  flex: none;
}

.window {
  position: relative;
  height: 100%;
  display: flex;
  flex-direction: column;
  background-color: #e9ebfa;
  border-radius: 9px;
  overflow: hidden;
}

/* title and menu */
.titlebar {
  height: 43px;
  flex: none;
  display: flex;
  align-items: center;
  padding-left: 10px;
  background-color: #e3f8f7;
}

.titlebar h1 {
  flex: 1;
  padding: 0 0 2px 7px;
  white-space: nowrap;
}

.winbtn {
  width: 70px;
  height: 100%;
}

.winbtn svg {
  width: 16px;
  height: 16px;
}

.menubar {
  height: 35px;
  flex: none;
  display: flex;
  align-items: center;
  padding-bottom: 3px;
  background-color: #eeeffc;
}

.menubar .icon {
  margin: 0 4px 0 1px;
}

.menubar > button {
  padding: 0 8px 0 7px;
  font-size: 17px;
  white-space: nowrap;
}

.mdi {
  display: flex;
  align-items: center;
  gap: 12px;
  margin: 10px 7px 0 auto;
}

.mdi svg,
.panel header svg {
  display: block;
  width: 14px;
  height: 14px;
}

u {
  text-underline-offset: 2px;
}

/* horizontal toolbars */
.bar-row {
  height: 37px;
  flex: none;
  display: flex;
  background-color: #e9ebfa;
}

.bar {
  height: 37px;
  flex: none;
  display: flex;
  align-items: center;
  padding-right: 3px;
  border-bottom: 2px solid #9c9cb8;
  border-radius: 4px;
  background: linear-gradient(#f6f9fe, #e4e6f2 45%, #b0b0ca);
}

.bar.grow {
  flex: 1;
  padding-right: 0;
}

.bar.stub {
  width: 24px;
}

.grip {
  width: 9px;
  height: 16px;
  flex: none;
  border-left: 3px dotted #a8a8bb;
  border-right: 3px solid transparent;
  background-clip: padding-box;
  margin-left: 4px;
  margin-right: -4px;
}

.tb {
  width: 33px;
  height: 33px;
  flex: none;
  display: flex;
  align-items: center;
  justify-content: center;
}

.tb.on {
  border: 1px solid #0078d7;
  background-color: #cfe4f6;
}

.tb.off .icon {
  opacity: 0.55;
}

.tb.drop {
  width: 46px;
  padding-left: 4px;
  justify-content: flex-start;
}

.tb.drop.wide {
  width: 51px;
}

.tb.drop::after {
  content: "";
  margin-left: 6px;
  border: 4px solid transparent;
  border-top: 5px solid #000;
  border-bottom: 0;
}

.tb.drop.wide::after {
  margin-left: 10px;
  border-top-color: #777;
}

.tb.half .icon {
  opacity: 0.65;
}

.runner {
  color: #5fc873;
  fill: #5fc873;
}

.sep {
  width: 2px;
  height: 25px;
  flex: none;
  margin: 0 3px;
  background-color: #c6c7ce;
}

.cap {
  width: 16px;
  flex: none;
  display: flex;
  align-items: center;
  justify-content: center;
  background: linear-gradient(#b6b6cc, #e3e4f3);
}

.cap svg {
  width: 11px;
  height: 30px;
}

.down {
  flex: none;
  border: 5px solid transparent;
  border-top: 6px solid #000;
  border-bottom: 0;
}

.down.dim {
  margin: 0 11px;
  border-top-color: #777;
}

.combo {
  height: 28px;
  flex: none;
  display: flex;
  align-items: center;
  background-color: #fff;
}

.combo select {
  appearance: none;
  flex: 1;
  min-width: 0;
  padding: 0 3px;
  border: 0;
  background: none;
  font: inherit;
  color: inherit;
  opacity: 1;
}

.combo .down {
  margin-right: 7px;
}

.zoom {
  width: 88px;
  margin: 0 3px;
  border-right: 1px solid #fff;
  background: linear-gradient(to right, #fff 64px, #c6c8da 64px);
}

.combo.grey {
  border: 1px solid #a3a3ab;
  background-color: #f0f0f3;
  color: #777;
  font-size: 17px;
}

.combo.grey .down {
  border-top-color: #777;
}

.font {
  width: 190px;
  margin: 0 5px 0 2px;
}

.font .icon {
  margin: 0 2px 0 6px;
  width: 20px;
}

.size {
  width: 88px;
  margin-right: 4px;
}

.linetype {
  width: 88px;
  margin: 0 11px 0 3px;
}

.linetype .down {
  margin-left: 6px;
}

.stroke {
  width: 28px;
  height: 4px;
  margin-left: 4px;
  flex: none;
  background-color: #222;
}

.swatch {
  width: 36px;
  height: 25px;
  border: 1px solid #fff;
}

.fmt {
  font-family: "Liberation Serif", serif;
  font-size: 24px;
  font-weight: bold;
  line-height: 24px;
  color: #6d6d72;
}

.fmt.small {
  font-size: 19px;
}

.fmt.big {
  font-size: 30px;
  font-weight: normal;
}

.fmt sup,
.fmt sub,
.both {
  font-family: "Liberation Sans", sans-serif;
  font-size: 13px;
  line-height: 13px;
  font-weight: normal;
}

.fmt sup {
  align-self: flex-start;
  margin-top: 3px;
}

.fmt sub {
  align-self: flex-end;
}

.both {
  display: flex;
  flex-direction: column;
}

.red {
  color: #ee5a5a;
}

.blue {
  color: #5555e8;
}

.fontcolor {
  width: 24px;
  border-bottom: 5px solid #707070;
  font: bold 22px/20px "Liberation Serif", serif;
  color: #6a6ac0;
}

/* work area */
.workspace {
  flex: 1;
  min-height: 0;
  display: flex;
}

.tabs {
  width: 29px;
  flex: none;
  display: flex;
  flex-direction: column;
  gap: 14px;
  padding: 4px 2px 0 0;
}

.tab {
  writing-mode: vertical-rl;
  text-orientation: sideways;
  padding: 6px 0;
  border-right: 1px solid #dcdce4;
  border-bottom: 1px solid #dcdce4;
  background-color: #f2f2f3;
  color: #777;
  font-family: "Liberation Mono", "Noto Sans CJK SC", monospace;
  font-size: 17px;
  line-height: 26px;
  text-align: left;
}

.tab.alert {
  color: #f00;
}

.t1 {
  height: 156px;
}

.t2 {
  height: 139px;
}

.t3 {
  height: 103px;
}

.tabs.right {
  padding: 4px 0 0 3px;
}

.tabs.right .tab {
  height: 67px;
  font-size: 15px;
}

.dock {
  flex: none;
  display: flex;
  flex-direction: column;
}

.left-dock {
  width: 50px;
}

.right-dock {
  width: 36px;
}

.vbar {
  flex: none;
  display: flex;
  flex-direction: column;
  padding-bottom: 2px;
  border-left: 1px solid #a9abc0;
  border-right: 1px solid #9a9ab4;
  border-radius: 4px;
  background: linear-gradient(to right, #f6f9fe, #e2e4f0 45%, #b0b0ca);
}

.vbar.narrow,
.vcap.narrow {
  width: 37px;
}

.vbar.fill {
  flex: 1;
}

.left-dock .drop::after {
  margin-left: 7px;
}

.vgrip {
  width: 16px;
  height: 3px;
  flex: none;
  margin: 4px 0 3px 8px;
  border-top: 3px dotted #a8a8bb;
}

.vgrip.long {
  width: 28px;
}

.vsep {
  height: 2px;
  margin: 3px 0 3px 9px;
  background-color: #c6c7ce;
}

.vcap {
  height: 15px;
  flex: none;
  display: flex;
  align-items: center;
  justify-content: flex-end;
  gap: 6px;
  padding-right: 3px;
  background: linear-gradient(to right, #e4e6f5, #bcbcd2);
}

.vcap svg {
  width: 11px;
  height: 9px;
}

.center {
  flex: 1;
  min-width: 0;
  display: flex;
  flex-direction: column;
  padding-left: 2px;
}

.canvas {
  position: relative;
  flex: 1;
  min-height: 0;
  border-left: 1px solid #666;
  border-top: 1px solid #666;
  border-bottom: 1px solid #e4e4e4;
  background-color: #c0c0c0;
}

.center .bar-row {
  height: 39px;
  padding: 1px 0;
}

.page {
  display: block;
  height: 100%;
  background-color: #fff;
}

.layer-no {
  font: bold 24px "Liberation Sans", sans-serif;
  text-anchor: middle;
}

.tick {
  font-family: "Liberation Mono", monospace;
  font-size: 14px;
}

.axis-title {
  font-family: "Liberation Mono", "Noto Sans CJK SC", monospace;
  font-size: 18px;
  font-weight: 300;
  text-anchor: middle;
}

/* context menus */
.menu {
  position: absolute;
  margin: 0;
  padding: 2px;
  list-style: none;
  border: 1px solid #868686;
  background: linear-gradient(to right, #f0f0f0 32px, #c9c9c9 32px, #c9c9c9 33px, #fcfcfc 33px);
  box-shadow: 3px 3px 2px rgba(0, 0, 0, 0.3);
  font-size: 17px;
}

.main-menu {
  left: 311px;
  top: 116px;
  width: 298px;
}

.sub-menu {
  left: 608px;
  top: 405px;
  width: 335px;
  padding: 1px 2px;
}

.menu button {
  width: 100%;
  height: 33px;
  display: flex;
  align-items: center;
  padding: 0 5px 3px 35px;
  border: 1px solid transparent;
  border-radius: 3px;
  white-space: pre;
}

.menu .with-icon {
  padding-left: 1px;
}

.with-icon .icon {
  margin-right: 10px;
}

.menu .hot {
  border-color: #8fb8d8;
  background: linear-gradient(#fbfdff, #dcebf8 45%, #b5d8f3);
}

.rule {
  height: 1px;
  margin: 4px -2px 3px 49px;
  background-color: #c6c6c6;
}

.sub {
  margin-left: auto;
  border: 6px solid transparent;
  border-left: 7px solid #000;
  border-right: 0;
}

.menu kbd {
  margin-left: auto;
  margin-right: 11px;
  font: inherit;
}

.menu .expand button {
  height: 23px;
  justify-content: center;
  padding: 0 0 0 4px;
}

.expand svg {
  width: 15px;
  height: 15px;
}

/* object manager */
.panel {
  width: 229px;
  flex: none;
  margin-left: 4px;
  display: flex;
  flex-direction: column;
}

.panel header {
  height: 33px;
  display: flex;
  align-items: center;
  gap: 8px;
  padding: 0 6px 2px 4px;
  background: linear-gradient(#bccddd, #dde8f4);
}

.panel h2 {
  flex: 1;
}

.panel header .down {
  display: block;
  border-width: 7px 7px 0;
}

.objects {
  flex: 1;
  border: 2px solid #777;
  border-right-width: 1px;
  border-bottom-width: 1px;
  background-color: #fff;
  font-family: "Liberation Sans", sans-serif;
  font-size: 18px;
}

.node {
  height: 30px;
  display: flex;
  align-items: center;
}

.node.selected {
  gap: 2px;
  padding-left: 2px;
  margin: 1px;
  border: 1px dotted #fff;
  background-color: #0078d7;
  color: #fff;
}

.toggle {
  width: 17px;
  height: 17px;
  display: flex;
  align-items: center;
  justify-content: center;
  border: 1px solid #999;
  background-color: #f4f4f4;
}

.toggle::before {
  content: "";
  width: 11px;
  height: 1px;
  background-color: #3a5bb5;
}

.branch {
  width: 12px;
  height: 15px;
  margin: -16px 22px 0 12px;
  border-left: 1px dotted #999;
  border-bottom: 1px dotted #999;
}

.node label {
  display: flex;
  align-items: center;
  gap: 4px;
}

.node input {
  appearance: none;
  width: 23px;
  height: 23px;
  margin: 0;
  border-radius: 4px;
  background-color: #0a5cb8;
  display: flex;
  align-items: center;
  justify-content: center;
}

.node input::before {
  content: "";
  width: 10px;
  height: 5px;
  border-left: 1px solid #fff;
  border-bottom: 1px solid #fff;
  transform: rotate(-45deg);
}

/* status bar */
.status {
  height: 27px;
  flex: none;
  display: flex;
  align-items: center;
  padding-left: 47px;
  border-top: 1px solid #d8d8e2;
  background-color: #f0f0f0;
  white-space: nowrap;
}

.status span {
  padding: 0 3px 0 4px;
  border-left: 1px solid #d4d4d4;
}

.status .msg {
  flex: 1;
  padding-left: 0;
  border: 0;
  font-size: 17px;
}

.status .gap {
  width: 11px;
  height: 24px;
  padding: 0;
}

.status .gap.small {
  width: 6px;
}

.status .where {
  font-size: 17px;
}

.status .end {
  width: 20px;
  height: 24px;
}

.orb {
  position: absolute;
  left: 0;
  bottom: -1px;
  width: 47px;
  height: 47px;
}

.watermark {
  position: absolute;
  right: 3px;
  bottom: 8px;
  font-size: 31px;
  line-height: 36px;
  color: rgba(255, 255, 255, 0.75);
  text-shadow: 1px 1px 1px rgba(110, 110, 110, 0.7);
  pointer-events: none;
}
```
